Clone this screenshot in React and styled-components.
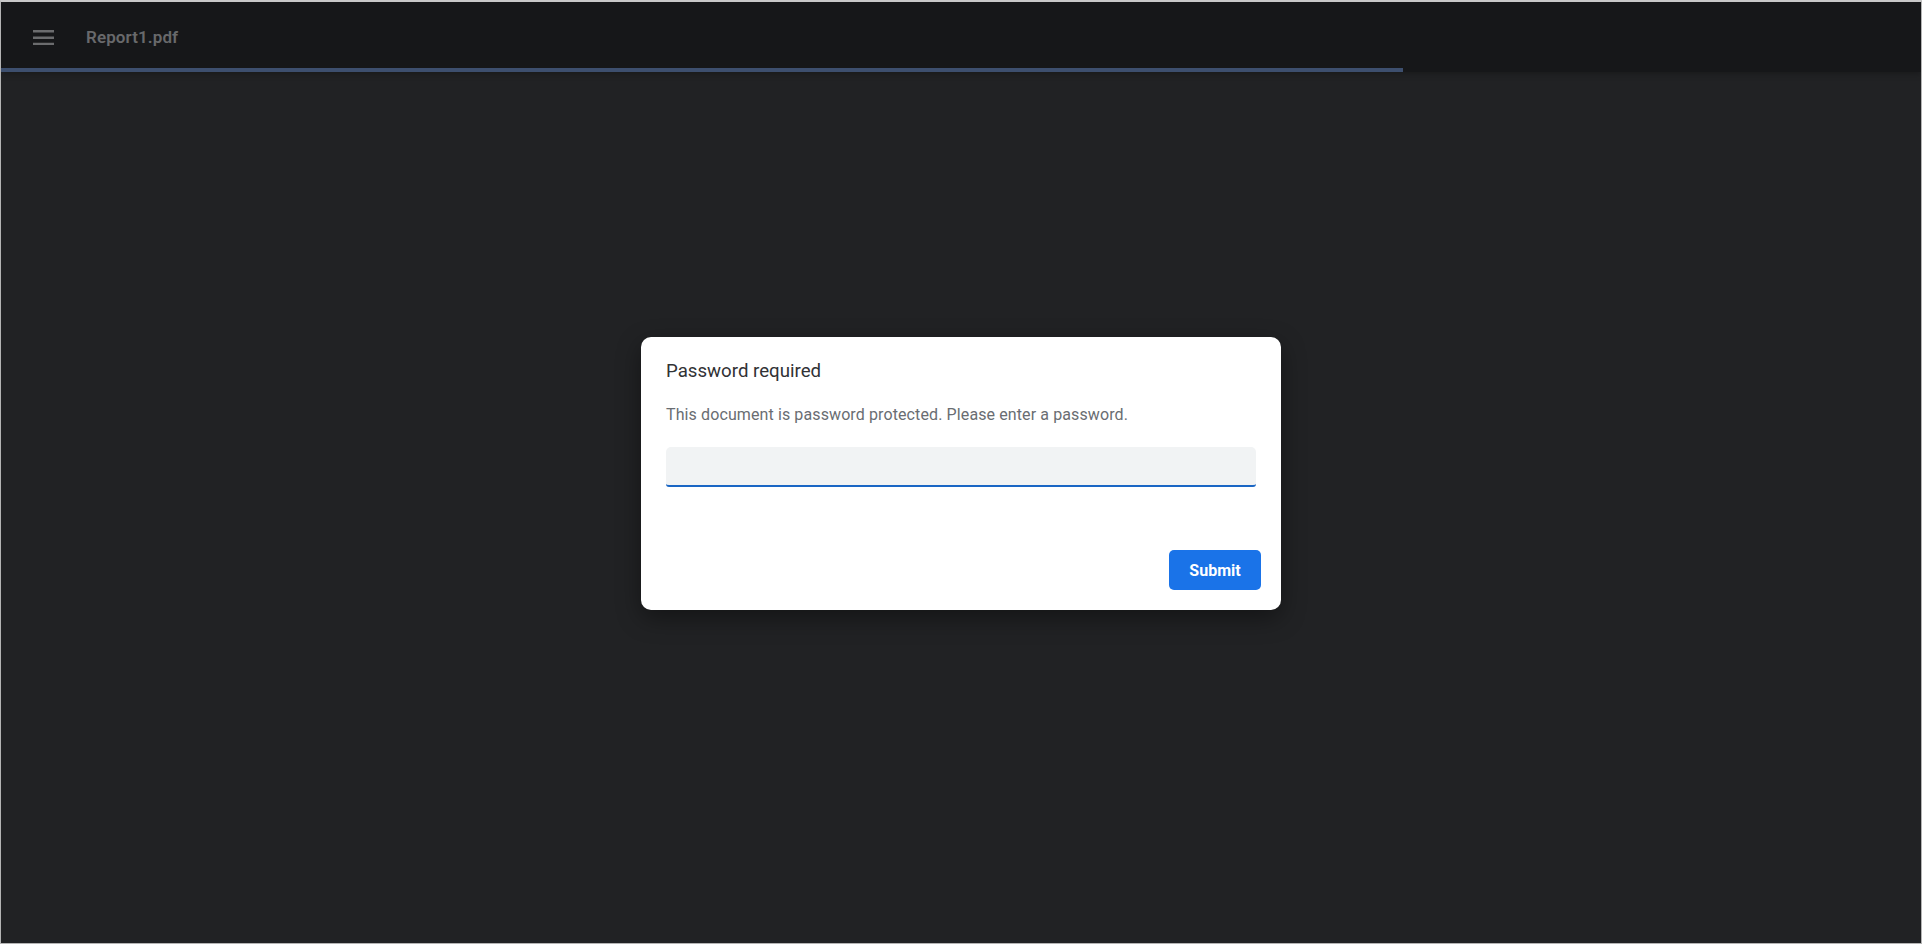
import React from "react";
import styled, { createGlobalStyle } from "styled-components";

const GlobalStyle = createGlobalStyle`
  html, body {
    margin: 0;
    height: 100%;
    background: #212224;
    font-family: Roboto, "Liberation Sans", sans-serif;
  }
  #root {
    height: 100%;
  }
`;

function App() {
  return (
    <>
      <GlobalStyle />
      <Frame>
        <Toolbar>
          <MenuButton aria-label="Menu">
            <svg width="21" height="16" viewBox="0 0 21 16">
              <path d="M0 2.2h21M0 8.7h21M0 15h21" stroke="#6b6c6e" strokeWidth="2.4" fill="none" />
            </svg>
          </MenuButton>
          <FileName>Report1.pdf</FileName>
          <Progress $value={73} />
        </Toolbar>
        <Viewer>
          <Dialog>
            <Title>Password required</Title>
            <Message>This document is password protected. Please enter a password.</Message>
            <PasswordInput type="password" />
            <Actions>
              <SubmitButton>Submit</SubmitButton>
            </Actions>
          </Dialog>
        </Viewer>
      </Frame>
    </>
  );
}

const Frame = styled.div`
  height: 944px;
  box-sizing: border-box;
  border: 1px solid #b4b4b4;
  border-top: 2px solid #c8c8c8;
  display: flex;
  flex-direction: column;
  overflow: hidden;
`;

const Toolbar = styled.header`
  position: relative;
  height: 70px;
  flex: none;
  box-sizing: border-box;
  padding: 4px 0;
  background: #161719;
  display: flex;
  align-items: center;
  box-shadow: 0 2px 6px rgba(0, 0, 0, 0.25);
  z-index: 1;
`;

const MenuButton = styled.button`
  border: 0;
  padding: 0;
  margin-left: 32px;
  background: none;
  display: flex;
`;

const FileName = styled.div`
  margin-left: 32px;
  font-size: 17px;
  font-weight: 600;
  letter-spacing: 0.1px;
  color: #68696b;
`;

const Progress = styled.div`
  position: absolute;
  left: 0;
  bottom: 0;
  height: 4px;
  width: ${(props) => props.$value}%;
  background: #3d4f6e;
`;

const Viewer = styled.main`
  flex: 1;
  background: #212224;
  display: flex;
  justify-content: center;
  padding-top: 265px;
`;

const Dialog = styled.section`
  width: 640px;
  height: 273px;
  box-sizing: border-box;
  padding: 23px 20px 20px 25px;
  background: #fff;
  border-radius: 10px;
  box-shadow: 0 8px 24px rgba(0, 0, 0, 0.4);
  display: flex;
  flex-direction: column;
`;

const Title = styled.h2`
  margin: 0;
  font-size: 18.67px;
  line-height: 22px;
  font-weight: 400;
  color: #313235;
`;

const Message = styled.p`
  margin: 23px 0 0;
  font-size: 16px;
  line-height: 20px;
  letter-spacing: 0.11px;
  color: #696d72;
`;

const PasswordInput = styled.input`
  display: block;
  width: 590px;
  height: 40px;
  margin-top: 22px;
  box-sizing: border-box;
  border: 0;
  border-bottom: 2px solid #1a66c4;
  border-radius: 5px 5px 3px 3px;
  background: #f1f3f4;
  outline: none;
`;

const Actions = styled.div`
  margin-top: auto;
  display: flex;
  justify-content: flex-end;
`;

const SubmitButton = styled.button`
  width: 92px;
  height: 40px;
  border: 0;
  border-radius: 5px;
  background: #1a73e8;
  color: #fff;
  font-family: Roboto, "Liberation Sans", sans-serif;
  font-size: 16px;
  font-weight: 700;
`;

export default App;
